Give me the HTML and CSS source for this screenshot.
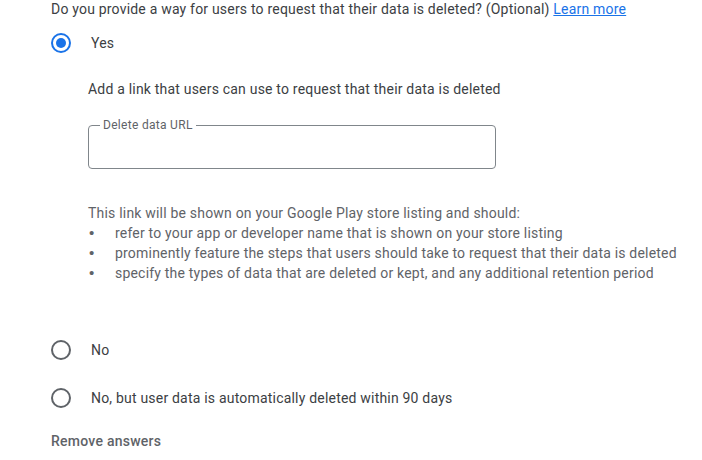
FILE: index.html
```html
<!DOCTYPE html>
<html>
<head>
<meta charset="utf-8">
<link rel="stylesheet" href="styles.css">
</head>
<body>
<div class="page">
  <p class="question">Do you provide a way for users to request that their data is deleted? (Optional) <a class="link" href="#">Learn more</a></p>

  <div class="option option-yes">
    <span class="radio checked"></span>
    <span class="option-label">Yes</span>
  </div>

  <div class="details">
    <p class="hint">Add a link that users can use to request that their data is deleted</p>
    <div class="field">
      <span class="field-label">Delete data URL</span>
    </div>
    <p class="desc">This link will be shown on your Google Play store listing and should:</p>
    <ul class="bullets">
      <li>refer to your app or developer name that is shown on your store listing</li>
      <li>prominently feature the steps that users should take to request that their data is deleted</li>
      <li>specify the types of data that are deleted or kept, and any additional retention period</li>
    </ul>
  </div>

  <div class="option option-no">
    <span class="radio"></span>
    <span class="option-label">No</span>
  </div>

  <div class="option option-auto">
    <span class="radio"></span>
    <span class="option-label">No, but user data is automatically deleted within 90 days</span>
  </div>

  <p class="remove">Remove answers</p>
</div>
</body>
</html>
```

FILE: styles.css
```css
html, body {
  margin: 0;
  padding: 0;
  background: #ffffff;
}

body {
  font-family: Roboto, "Liberation Sans", Arial, sans-serif;
  font-size: 14px;
  line-height: 20px;
  letter-spacing: 0.2px;
  color: #3c4043;
}

.page {
  padding-left: 51px;
  margin-top: -1px;
}

p {
  margin: 0;
}

.question {
  color: #3c4043;
}

.link {
  color: #1a73e8;
  text-decoration: underline;
}

.option {
  display: flex;
  align-items: center;
  gap: 20px;
  height: 20px;
}

.option-yes {
  margin-top: 14px;
}

.option-no {
  margin-top: 57px;
}

.option-auto {
  margin-top: 28px;
}

.radio {
  box-sizing: border-box;
  width: 20px;
  height: 20px;
  border: 2px solid #5f6368;
  border-radius: 50%;
  display: flex;
  align-items: center;
  justify-content: center;
  flex: none;
}

.radio.checked {
  border-color: #1a73e8;
}

.radio.checked::after {
  content: "";
  width: 10px;
  height: 10px;
  border-radius: 50%;
  background: #1a73e8;
}

.option-label {
  color: #3c4043;
}

.details {
  padding-left: 37px;
}

.hint {
  margin-top: 26px;
  color: #3c4043;
}

.field {
  position: relative;
  box-sizing: border-box;
  margin-top: 26px;
  width: 408px;
  height: 44px;
  border: 1px solid #80868b;
  border-radius: 4px;
}

.field-label {
  position: absolute;
  left: 11px;
  top: -8px;
  padding: 0 3px;
  background: #ffffff;
  font-size: 12px;
  line-height: 14px;
  letter-spacing: 0.3px;
  color: #5f6368;
}

.desc {
  margin-top: 34px;
  color: #5f6368;
}

.bullets {
  list-style: none;
  margin: 0;
  padding: 0;
  color: #5f6368;
}

.bullets li {
  display: flex;
}

.bullets li::before {
  content: "•";
  width: 27px;
  flex: none;
  padding-left: 1px;
  box-sizing: border-box;
  font-family: Arial, "Liberation Sans", sans-serif;
  font-size: 15px;
  color: #5f6368;
}

.remove {
  margin-top: 23px;
  color: #5f6368;
  font-weight: 500;
  letter-spacing: 0.25px;
}
```
